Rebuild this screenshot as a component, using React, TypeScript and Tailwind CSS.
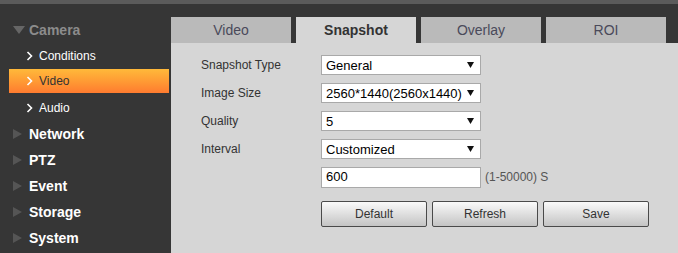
import React from "react";

const font = { fontFamily: '"Liberation Sans", Arial, sans-serif' };

function Chevron() {
  return (
    <svg width="7" height="10" viewBox="0 0 7 10" className="shrink-0">
      <path d="M1.5 1 L5.5 5 L1.5 9" fill="none" stroke="#ffffff" strokeWidth="1.6" />
    </svg>
  );
}

function RightTri() {
  return (
    <svg width="9" height="10" viewBox="0 0 9 10" className="shrink-0">
      <path d="M0 0 L9 5 L0 10 Z" fill="#555555" />
    </svg>
  );
}

function DownTri() {
  return (
    <svg width="12" height="8" viewBox="0 0 12 8" className="shrink-0">
      <path d="M0 0 L12 0 L6 8 Z" fill="#666666" />
    </svg>
  );
}

function SelArrow() {
  return (
    <svg width="7" height="6" viewBox="0 0 7 6" className="shrink-0">
      <path d="M0 0 L7 0 L3.5 6 Z" fill="#111111" />
    </svg>
  );
}

function Select({ value }: { value: string }) {
  return (
    <div className="w-[160px] h-[20px] bg-white border border-[#a9a9a9] flex items-center justify-between pl-[4px] pr-[6px] text-[13px] text-black leading-none">
      <span>{value}</span>
      <SelArrow />
    </div>
  );
}

function Row({ label, children }: { label: string; children: React.ReactNode }) {
  return (
    <div className="flex items-center h-[20px]">
      <div className="w-[120px] text-[12px] text-[#333333]">{label}</div>
      {children}
    </div>
  );
}

function Btn({ label }: { label: string }) {
  return (
    <div className="w-[106px] h-[26px] rounded-[2px] border border-[#4a4a4a] bg-gradient-to-b from-[#fafafa] to-[#c4c4c4] flex items-center justify-center text-[12px] text-[#333333]">
      {label}
    </div>
  );
}

export default function App() {
  const sub = ["Conditions", "Video", "Audio"];
  const tops = ["Network", "PTZ", "Event", "Storage", "System"];
  const tabs = ["Video", "Snapshot", "Overlay", "ROI"];
  return (
    <div className="w-[678px] h-[253px] flex flex-col overflow-hidden bg-[#363636]" style={font}>
      <div className="h-[4px] bg-[#5b5b5b] shrink-0" />
      <div className="flex flex-1 min-h-0">
        <div className="w-[171px] shrink-0 bg-[#363636] pt-[13px]">
          <div className="h-[26px] flex items-center pl-[13px] gap-[4px]">
            <DownTri />
            <span className="text-[14px] font-bold text-[#8c8c8c]">Camera</span>
          </div>
          {sub.map((s) =>
            s === "Video" ? (
              <div key={s} className="h-[26px]">
                <div className="ml-[9px] w-[160px] h-[24px] bg-gradient-to-b from-[#ffb93a] to-[#ff7b2f] flex items-center pl-[17px] gap-[6px]">
                  <Chevron />
                  <span className="text-[12px] text-[#333333]">{s}</span>
                </div>
              </div>
            ) : (
              <div key={s} className="h-[26px] flex items-center pl-[26px] gap-[6px]">
                <Chevron />
                <span className="text-[12px] text-white">{s}</span>
              </div>
            )
          )}
          {tops.map((t) => (
            <div key={t} className="h-[26px] flex items-center pl-[13px] gap-[7px]">
              <RightTri />
              <span className="text-[14px] font-bold text-white">{t}</span>
            </div>
          ))}
        </div>
        <div className="flex-1 flex flex-col pt-[13px]">
          <div className="h-[26px] flex gap-[5px] shrink-0">
            {tabs.map((t) =>
              t === "Snapshot" ? (
                <div key={t} className="w-[120px] bg-[#d6d6d6] flex items-center justify-center text-[14px] font-bold text-[#333333]">
                  {t}
                </div>
              ) : (
                <div key={t} className="w-[120px] bg-[#bababa] flex items-center justify-center text-[14px] text-[#4a4a5a]">
                  {t}
                </div>
              )
            )}
          </div>
          <div className="flex-1 bg-[#d6d6d6] pl-[30px] pt-[12px] flex flex-col">
            <div className="flex flex-col gap-[8px]">
              <Row label="Snapshot Type">
                <Select value="General" />
              </Row>
              <Row label="Image Size">
                <Select value="2560*1440(2560x1440)" />
              </Row>
              <Row label="Quality">
                <Select value="5" />
              </Row>
              <Row label="Interval">
                <Select value="Customized" />
              </Row>
              <Row label="">
                <div className="w-[160px] h-[21px] bg-white border border-[#a9a9a9] flex items-center pl-[4px] text-[13px] text-black">
                  600
                </div>
                <span className="ml-[4px] text-[12px] text-[#555555]">(1-50000) S</span>
              </Row>
            </div>
            <div className="flex gap-[5px] ml-[120px] mt-[14px]">
              <Btn label="Default" />
              <Btn label="Refresh" />
              <Btn label="Save" />
            </div>
          </div>
        </div>
      </div>
    </div>
  );
}
